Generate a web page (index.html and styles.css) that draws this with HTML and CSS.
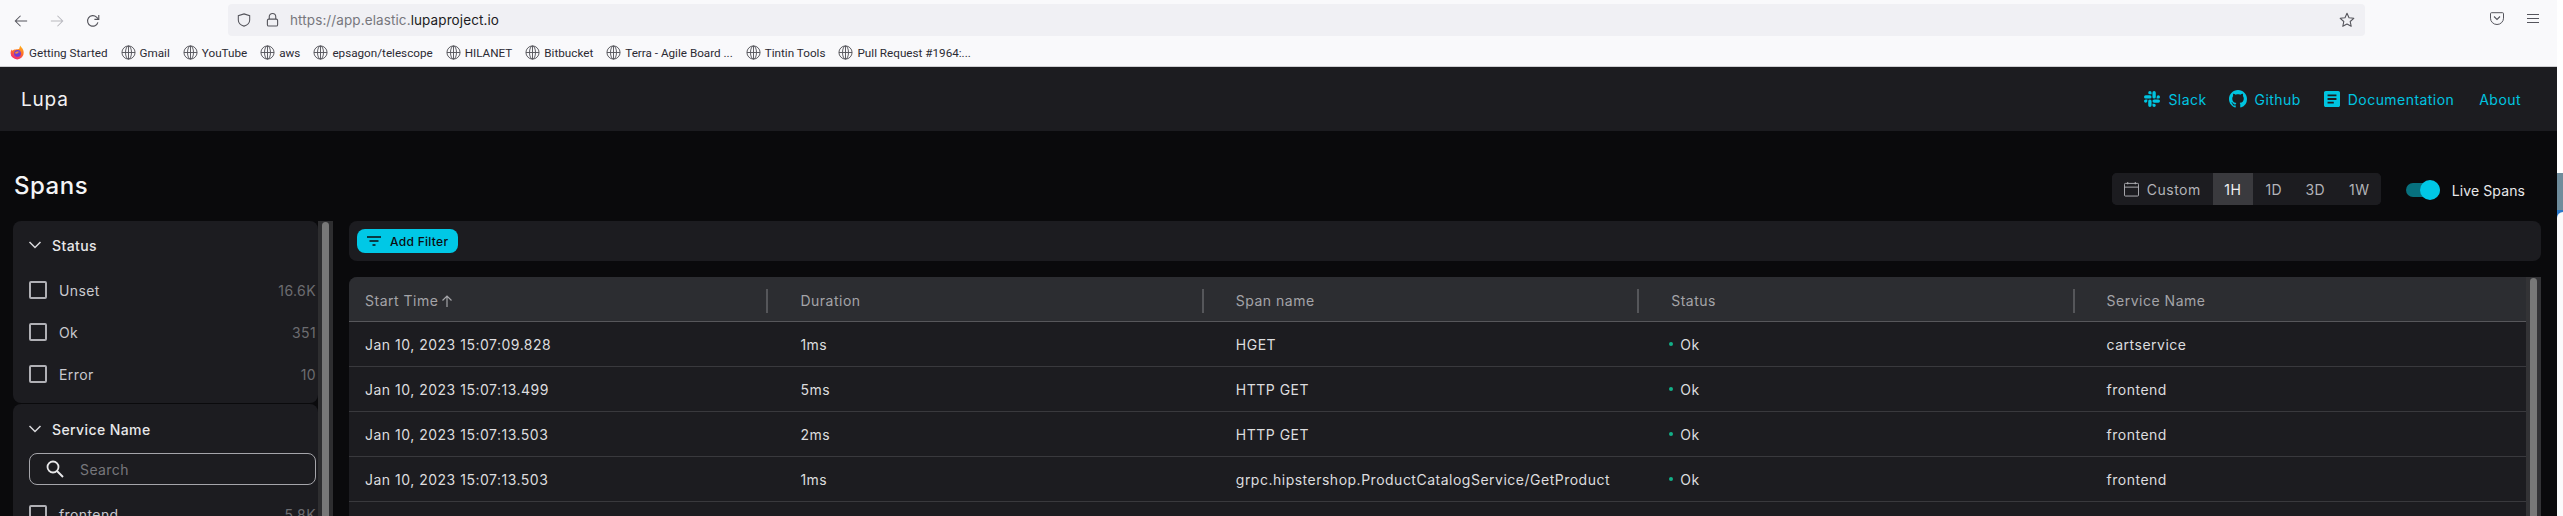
FILE: index.html
```html
<!DOCTYPE html>
<html lang="en">
<head>
<meta charset="utf-8">
<title>Lupa - Spans</title>
<link rel="stylesheet" href="styles.css">
</head>
<body>
<svg class="defs" width="0" height="0" aria-hidden="true">
  <symbol id="globe" viewBox="0 0 16 16"><g fill="none" stroke="currentColor" stroke-width="1"><circle cx="8" cy="8" r="7"/><ellipse cx="8" cy="8" rx="3.2" ry="7"/><path d="M1 8h14M8 1v14"/></g></symbol>
  <symbol id="chevron" viewBox="0 0 14 14"><path d="M1.5 4l5.5 5.5L12.5 4" fill="none" stroke="currentColor" stroke-width="1.5"/></symbol>
</svg>
<div class="screen">
  <div class="window">
    <header class="toolbar">
      <div class="nav-buttons">
        <svg class="tb-icon" viewBox="0 0 16 16"><path d="M15 8H1.5M7.5 2l-6 6 6 6" fill="none" stroke="#55555c" stroke-width="1.2"/></svg>
        <svg class="tb-icon" viewBox="0 0 16 16"><path d="M1 8h13.5M8.5 2l6 6-6 6" fill="none" stroke="#b9b9be" stroke-width="1.2"/></svg>
        <svg class="tb-icon" viewBox="0 0 16 16"><path d="M13.6 9.5A6 6 0 1 1 12 3.6l2 2" fill="none" stroke="#55555c" stroke-width="1.3"/><path d="M14.6 1.2v5h-5" fill="none" stroke="#55555c" stroke-width="1.3"/></svg>
      </div>
      <div class="urlbar">
        <svg class="shield" viewBox="0 0 16 16"><path d="M8 1l6.5 2v5c0 3.5-3 6-6.500 7C4.500 14 1.500 11.500 1.500 8V3z" fill="none" stroke="#55555c" stroke-width="1.200"/></svg>
        <svg class="lock" viewBox="0 0 14 16"><path d="M3.500 7V4.500a3.500 3.500 0 0 1 7 0V7" fill="none" stroke="#55555c" stroke-width="1.200"/><rect x="1.500" y="7" width="11" height="7.500" rx="1.500" fill="none" stroke="#55555c" stroke-width="1.200"/></svg>
        <span class="url"><span class="url-dim">https://app.elastic.</span>lupaproject.io</span>
        <svg class="star" viewBox="0 0 16 16"><path d="M8 1.300l2 4.500 4.800.5-3.600 3.200 1 4.800L8 12l-4.200 2.300 1-4.800L1.200 6.300 6 5.800z" fill="none" stroke="#55555c" stroke-width="1.100" stroke-linejoin="round"/></svg>
      </div>
      <div class="tb-right">
        <svg class="pocket" viewBox="0 0 14 13"><path d="M1.500.7h11a1 1 0 0 1 1 1v4.500a6.500 6.300 0 0 1-13 0V1.700a1 1 0 0 1 1-1z" fill="none" stroke="#55555c" stroke-width="1"/><path d="M4 4.500l3 3 3-3" fill="none" stroke="#55555c" stroke-width="1.100"/></svg>
        <div class="menu-icon"><i></i><i></i><i></i></div>
      </div>
    </header>
    <nav class="bookmarks">
      <a class="bm">
        <svg class="fx" viewBox="0 0 16 16"><defs><linearGradient id="fxg" x1="0.7" y1="0" x2="0.3" y2="1"><stop offset="0" stop-color="#ffb21a"/><stop offset=".5" stop-color="#ff6a2a"/><stop offset="1" stop-color="#f0257a"/></linearGradient></defs><path d="M11 0c.4 1.600 2.300 2.500 3 4.500.4.900.6 2 .6 3.100a7 7 0 0 1-14 .4C.6 6.500 1 5.300 1.700 4.200l1 1.300C4 3.900 8.300 4.100 9.700 3.700 10.100 2.500 10.400 1 11 0z" fill="url(#fxg)"/><circle cx="8" cy="8.400" r="3.600" fill="#6e3bd8"/><path d="M5 8.300C5.600 6.500 9 5.700 11 7.200 9.200 6.900 7.800 7.500 7.800 8.800z" fill="#ff8f2b"/></svg>
        Getting Started</a>
      <a class="bm"><svg class="gl"><use href="#globe"/></svg>Gmail</a>
      <a class="bm"><svg class="gl"><use href="#globe"/></svg>YouTube</a>
      <a class="bm"><svg class="gl"><use href="#globe"/></svg>aws</a>
      <a class="bm"><svg class="gl"><use href="#globe"/></svg>epsagon/telescope</a>
      <a class="bm"><svg class="gl"><use href="#globe"/></svg>HILANET</a>
      <a class="bm"><svg class="gl"><use href="#globe"/></svg>Bitbucket</a>
      <a class="bm"><svg class="gl"><use href="#globe"/></svg>Terra - Agile Board ...</a>
      <a class="bm"><svg class="gl"><use href="#globe"/></svg>Tintin Tools</a>
      <a class="bm"><svg class="gl"><use href="#globe"/></svg>Pull Request #1964:...</a>
    </nav>
    <div class="app-nav">
      <div class="brand">Lupa</div>
      <div class="links">
        <a class="link"><svg class="l-icon" viewBox="0 0 24 24"><path fill="currentColor" d="M5.042 15.165a2.528 2.528 0 0 1-2.52 2.523A2.528 2.528 0 0 1 0 15.165a2.527 2.527 0 0 1 2.522-2.52h2.52v2.52zM6.313 15.165a2.527 2.527 0 0 1 2.521-2.52 2.527 2.527 0 0 1 2.521 2.52v6.313A2.528 2.528 0 0 1 8.834 24a2.528 2.528 0 0 1-2.521-2.522v-6.313zM8.834 5.042a2.528 2.528 0 0 1-2.521-2.52A2.528 2.528 0 0 1 8.834 0a2.528 2.528 0 0 1 2.521 2.522v2.52H8.834zM8.834 6.313a2.528 2.528 0 0 1 2.521 2.521 2.528 2.528 0 0 1-2.521 2.521H2.522A2.528 2.528 0 0 1 0 8.834a2.528 2.528 0 0 1 2.522-2.521h6.312zM18.956 8.834a2.528 2.528 0 0 1 2.522-2.521A2.528 2.528 0 0 1 24 8.834a2.528 2.528 0 0 1-2.522 2.521h-2.522V8.834zM17.688 8.834a2.528 2.528 0 0 1-2.523 2.521 2.527 2.527 0 0 1-2.52-2.521V2.522A2.527 2.527 0 0 1 15.165 0a2.528 2.528 0 0 1 2.523 2.522v6.312zM15.165 18.956a2.528 2.528 0 0 1 2.523 2.522A2.528 2.528 0 0 1 15.165 24a2.527 2.527 0 0 1-2.52-2.522v-2.522h2.52zM15.165 17.688a2.527 2.527 0 0 1-2.52-2.523 2.526 2.526 0 0 1 2.52-2.52h6.313A2.527 2.527 0 0 1 24 15.165a2.528 2.528 0 0 1-2.522 2.523h-6.313z"/></svg>Slack</a>
        <a class="link link-github"><svg class="l-icon gh" viewBox="0 0 16 16"><path fill="currentColor" d="M8 0C3.58 0 0 3.58 0 8c0 3.54 2.29 6.53 5.47 7.59.4.07.55-.17.55-.38 0-.19-.01-.82-.01-1.49-2.01.37-2.53-.49-2.69-.94-.09-.23-.48-.94-.82-1.13-.28-.15-.68-.52-.01-.53.63-.01 1.08.58 1.23.82.72 1.21 1.87.87 2.33.66.07-.52.28-.87.51-1.07-1.78-.2-3.64-.89-3.64-3.95 0-.87.31-1.59.82-2.15-.08-.2-.36-1.02.08-2.12 0 0 .67-.21 2.2.82.64-.18 1.32-.27 2-.27.68 0 1.36.09 2 .27 1.53-1.04 2.2-.82 2.2-.82.44 1.1.16 1.92.08 2.12.51.56.82 1.27.82 2.15 0 3.07-1.87 3.75-3.65 3.95.29.25.54.73.54 1.48 0 1.07-.01 1.93-.01 2.2 0 .21.15.46.55.38A8.013 8.013 0 0016 8c0-4.42-3.58-8-8-8z"/></svg>Github</a>
        <a class="link"><svg class="l-icon" viewBox="3 3 18 18"><path fill="currentColor" d="M19 3H5c-1.100 0-2 .9-2 2v14c0 1.100.9 2 2 2h14c1.100 0 2-.9 2-2V5c0-1.100-.9-2-2-2zm-5 14H7v-2h7v2zm3-4H7v-2h10v2zm0-4H7V7h10v2z"/></svg>Documentation</a>
        <a class="link link-about">About</a>
      </div>
    </div>
    <main class="page">
      <div class="title-row">
        <h1 class="title">Spans</h1>
        <div class="controls">
          <div class="segments">
            <div class="seg seg-custom"><svg class="cal" viewBox="0 0 16 16"><g fill="none" stroke="currentColor" stroke-width="1"><rect x=".5" y="2" width="15" height="13.500" rx="1"/><path d="M.5 6h15M4 .5V3M12 .5V3"/></g></svg>Custom</div>
            <div class="seg seg-active">1H</div>
            <div class="seg seg-1d">1D</div>
            <div class="seg seg-3d">3D</div>
            <div class="seg seg-1w">1W</div>
          </div>
          <div class="live">
            <div class="switch"><div class="thumb"></div></div>
            <span>Live Spans</span>
          </div>
        </div>
      </div>
      <div class="content">
        <aside class="sidebar">
          <div class="panels">
            <section class="panel panel-status">
              <div class="panel-head"><svg class="chev"><use href="#chevron"/></svg>Status</div>
              <div class="opt"><span class="box"></span><span class="opt-label">Unset</span><span class="count">16.6K</span></div>
              <div class="opt"><span class="box"></span><span class="opt-label">Ok</span><span class="count">351</span></div>
              <div class="opt"><span class="box"></span><span class="opt-label">Error</span><span class="count">10</span></div>
            </section>
            <section class="panel panel-service">
              <div class="panel-head panel-head-service"><svg class="chev"><use href="#chevron"/></svg>Service Name</div>
              <div class="search">
                <svg class="search-icon" viewBox="0 0 18 18"><circle cx="7" cy="7" r="5.500" fill="none" stroke="currentColor" stroke-width="1.800"/><path d="M11 11l6 6" stroke="currentColor" stroke-width="2"/></svg>
                <span class="placeholder">Search</span>
              </div>
              <div class="opt"><span class="box"></span><span class="opt-label">frontend</span><span class="count">5.8K</span></div>
            </section>
          </div>
          <div class="scrollbar"><div class="scroll-thumb"></div></div>
        </aside>
        <div class="results">
          <div class="filter-bar">
            <button class="add-filter"><svg class="filter-icon" viewBox="0 0 14 10"><path d="M0 1h14M2.500 5h9M5.500 9h3" stroke="currentColor" stroke-width="1.300"/></svg>Add Filter</button>
          </div>
          <div class="table-wrap">
            <div class="table">
              <div class="tr th">
                <div class="cell"><span class="head-label">Start Time<svg class="sort" viewBox="0 0 12 12"><path d="M6 12V1M1.500 5.500L6 1l4.500 4.500" fill="none" stroke="currentColor" stroke-width="1.200"/></svg></span><i class="sep"></i></div>
                <div class="cell"><span class="head-label">Duration</span><i class="sep"></i></div>
                <div class="cell"><span class="head-label">Span name</span><i class="sep"></i></div>
                <div class="cell"><span class="head-label">Status</span><i class="sep"></i></div>
                <div class="cell"><span class="head-label">Service Name</span></div>
              </div>
              <div class="tr"><div class="cell">Jan 10, 2023 15:07:09.828</div><div class="cell">1ms</div><div class="cell">HGET</div><div class="cell"><i class="dot"></i>Ok</div><div class="cell">cartservice</div></div>
              <div class="tr"><div class="cell">Jan 10, 2023 15:07:13.499</div><div class="cell">5ms</div><div class="cell">HTTP GET</div><div class="cell"><i class="dot"></i>Ok</div><div class="cell">frontend</div></div>
              <div class="tr"><div class="cell">Jan 10, 2023 15:07:13.503</div><div class="cell">2ms</div><div class="cell">HTTP GET</div><div class="cell"><i class="dot"></i>Ok</div><div class="cell">frontend</div></div>
              <div class="tr"><div class="cell">Jan 10, 2023 15:07:13.503</div><div class="cell">1ms</div><div class="cell">grpc.hipstershop.ProductCatalogService/GetProduct</div><div class="cell"><i class="dot"></i>Ok</div><div class="cell">frontend</div></div>
              <div class="tr"></div>
            </div>
            <div class="scrollbar scrollbar-table"><div class="scroll-thumb"></div></div>
          </div>
        </div>
      </div>
    </main>
  </div>
  <div class="edge">
    <div class="edge-top"></div>
    <div class="edge-wall"></div>
    <div class="edge-corner"><div class="edge-card"></div></div>
  </div>
</div>
</body>
</html>
```

FILE: styles.css
```css
* { box-sizing: border-box; }
html, body { margin: 0; height: 100%; background: #fff; }
body { font-family: Inter, "Liberation Sans", sans-serif; overflow: hidden; }
.defs { position: absolute; }
.screen { display: flex; width: 2563px; height: 516px; overflow: hidden; }
.window { width: 2557px; height: 516px; display: flex; flex-direction: column; background: #0a0a0c; overflow: hidden; }

/* browser chrome */
.toolbar { height: 40px; background: #f9f9fb; display: flex; align-items: center; padding-top: 2px; flex: none; }
.nav-buttons { display: flex; gap: 22px; padding-left: 14px; width: 228px; flex: none; }
.tb-icon { width: 14px; height: 14px; flex: none; }
.urlbar { width: 2137px; height: 32px; margin-top: -2px; background: #f0f0f4; border-radius: 4px; display: flex; align-items: center; padding: 0 10px 0 9px; flex: none; }
.shield { width: 14px; height: 16px; flex: none; }
.lock { width: 13px; height: 16px; margin-left: 15px; flex: none; }
.url { margin-left: 11px; font-size: 13.500px; color: #1c1b22; letter-spacing: .1px; flex: 1; }
.url-dim { color: #77777d; }
.star { width: 16px; height: 16px; flex: none; }
.tb-right { display: flex; align-items: center; gap: 23px; padding-left: 125px; margin-top: -6px; }
.pocket { width: 14px; height: 13px; }
.menu-icon { width: 12px; display: flex; flex-direction: column; gap: 3px; }
.menu-icon i { display: block; height: 1px; background: #55555c; }

.bookmarks { height: 27px; padding: 0 0 1px 10px; background: #f9f9fb; border-bottom: 1px solid #cfcfd2; display: flex; align-items: center; gap: 13px; font-family: Roboto, "Liberation Sans", sans-serif; font-size: 11.700px; color: #2b2a33; flex: none; }
.bm { display: flex; align-items: center; gap: 4px; white-space: nowrap; }
.fx { width: 15px; height: 16px; }
.gl { width: 15px; height: 15px; color: #55555c; }

/* app nav */
.app-nav { height: 64px; background: #1c1c20; display: flex; align-items: center; justify-content: space-between; padding: 0 36px 0 21px; flex: none; }
.brand { font-size: 19px; font-weight: 400; color: #f1f1f3; letter-spacing: .8px; }
.links { display: flex; align-items: center; gap: 23px; color: #00c4e0; font-size: 14px; letter-spacing: .45px; }
.link { display: flex; align-items: center; gap: 8px; }
.link-github { margin-left: -1px; }
.link-about { margin-left: 2px; }
.l-icon { width: 16px; height: 16px; }
.gh { width: 18px; height: 18px; }

/* page */
.page { flex: 1; min-height: 0; padding: 42px 16px 0 13px; }
.title-row { display: flex; justify-content: space-between; align-items: flex-start; height: 32px; }
.title { margin: -2px 0 0 1px; font-size: 24px; line-height: 30px; font-weight: 500; color: #f4f4f6; letter-spacing: .5px; }
.controls { display: flex; align-items: center; margin-right: 16px; gap: 25px; }
.segments { display: flex; height: 32px; background: #1c1c20; border-radius: 5px; overflow: hidden; font-size: 14px; color: #b3b3b8; letter-spacing: .5px; gap: 2px; }
.seg { display: flex; align-items: center; justify-content: center; background: #1c1c20; flex: none; }
.seg-custom { padding: 0 0 0 12px; gap: 8px; width: 99px; justify-content: flex-start; }
.seg-active { background: #3a3a3e; color: #f0f0f2; width: 40px; }
.seg-1d { width: 38px; }
.seg-3d { width: 41px; }
.seg-1w { width: 43px; }
.cal { width: 15px; height: 16px; }
.live { display: flex; align-items: center; gap: 12px; font-size: 14px; color: #e8e8ea; letter-spacing: .1px; margin-top: 2px; }
.switch { width: 34px; height: 14px; border-radius: 7px; background: #07717f; display: flex; align-items: center; justify-content: flex-end; }
.thumb { width: 20px; height: 20px; border-radius: 50%; background: #00c8e6; flex: none; }

.content { display: flex; gap: 16px; margin-top: 16px; }
.sidebar { width: 320px; display: flex; flex: none; height: 296px; overflow: hidden; }
.panels { width: 305px; flex: none; display: flex; flex-direction: column; gap: 1px; }
.panel { background: #1c1c20; padding: 0 2px 8px 16px; }
.panel-status { border-radius: 8px; }
.panel-service { border-radius: 8px 8px 0 0; }
.panel-head { height: 48px; display: flex; align-items: center; gap: 10px; font-size: 14px; font-weight: 500; color: #e8e8ea; letter-spacing: .4px; }
.panel-head-service { height: 49px; padding-top: 1px; }
.chev { width: 14px; height: 14px; color: #d8d8dc; margin-left: -1px; }
.opt { height: 42px; display: flex; align-items: center; font-size: 14px; color: #c9c9ce; letter-spacing: .4px; }
.box { width: 18px; height: 18px; border: 2px solid #b0b0b5; border-radius: 2px; margin-right: 12px; flex: none; }
.opt-label { flex: 1; }
.count { color: #6c6c70; }
.search { height: 32px; margin: 0 0 8px 0; border: 1px solid #a5a5aa; border-radius: 8px; display: flex; align-items: center; padding-left: 16px; gap: 16px; }
.search-icon { width: 18px; height: 18px; color: #e8e8ea; }
.placeholder { font-size: 14px; color: #77777c; letter-spacing: .4px; }

.scrollbar { width: 15px; background: #2e2e30; padding: 1px 4px 0; flex: none; }
.scroll-thumb { height: 100%; min-height: 500px; background: #787878; border-radius: 4px; }

.results { flex: 1; min-width: 0; }
.filter-bar { height: 40px; background: #1c1c20; border-radius: 8px; padding: 8px; }
.add-filter { height: 24px; width: 101px; padding: 0 0 0 10px; display: flex; align-items: center; gap: 9px; border: 0; border-radius: 8px; background: #00c8e6; color: #0c0c10; font: 500 12px Inter, "Liberation Sans", sans-serif; letter-spacing: .3px; }
.filter-icon { width: 14px; height: 10px; flex: none; }
.table-wrap { margin-top: 16px; display: flex; height: 239px; overflow: hidden; border-radius: 8px 0 0 0; }
.table { flex: 1; background: #1c1c20; min-width: 0; }
.tr { height: 45px; display: grid; grid-template-columns: repeat(5, 1fr); border-bottom: 1px solid #39393d; font-size: 14px; color: #dcdcdf; letter-spacing: .5px; }
.th { background: #2c2d31; border-bottom-color: #57575b; color: #a4a4a8; padding-top: 3px; }
.cell { display: flex; align-items: center; padding: 0 16px; white-space: nowrap; min-width: 0; }
.head-label { flex: 1; display: flex; align-items: center; gap: 3px; }
.sort { width: 12px; height: 12px; }
.sep { width: 2px; height: 24px; background: #55565a; flex: none; }
.dot { width: 4px; height: 4px; border-radius: 50%; background: #12b088; margin-right: 7px; flex: none; margin-left: -2px; }
.scrollbar-table { background: #333336; }

/* sliver of the desktop beside the window */
.edge { width: 6px; height: 516px; display: flex; flex-direction: column; flex: none; }
.edge-top { height: 173px; background: #fff; }
.edge-wall { height: 37px; background: #6f8c9b; }
.edge-corner { flex: 1; background: #2a78c8; }
.edge-card { height: 100%; margin-top: 2px; background: #fafafb; border-radius: 6px 0 0 0; }
```
